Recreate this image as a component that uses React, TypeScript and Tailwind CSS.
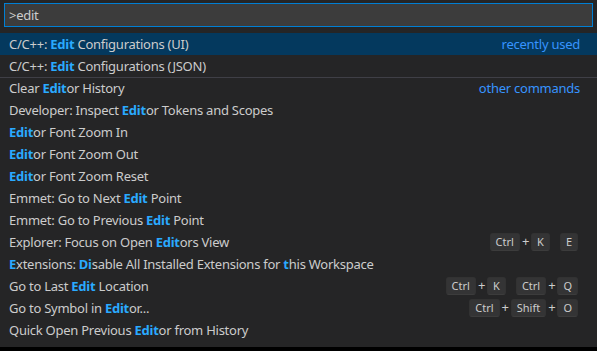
import React from "react";

type Item = {
  parts: [string, boolean][];
  label?: string;
  separator?: boolean;
  keys?: string[][];
  selected?: boolean;
};

const h = (s: string): [string, boolean] => [s, true];
const t = (s: string): [string, boolean] => [s, false];

const items: Item[] = [
  { parts: [t("C/C++: "), h("Edit"), t(" Configurations (UI)")], label: "recently used", selected: true },
  { parts: [t("C/C++: "), h("Edit"), t(" Configurations (JSON)")] },
  { parts: [t("Clear "), h("Edit"), t("or History")], label: "other commands", separator: true },
  { parts: [t("Developer: Inspect "), h("Edit"), t("or Tokens and Scopes")] },
  { parts: [h("Edit"), t("or Font Zoom In")] },
  { parts: [h("Edit"), t("or Font Zoom Out")] },
  { parts: [h("Edit"), t("or Font Zoom Reset")] },
  { parts: [t("Emmet: Go to Next "), h("Edit"), t(" Point")] },
  { parts: [t("Emmet: Go to Previous "), h("Edit"), t(" Point")] },
  { parts: [t("Explorer: Focus on Open "), h("Edit"), t("ors View")], keys: [["Ctrl", "K"], ["E"]] },
  {
    parts: [h("E"), t("xtensions: "), h("Di"), t("sable All Installed Extensions for "), h("t"), t("his Workspace")],
  },
  { parts: [t("Go to Last "), h("Edit"), t(" Location")], keys: [["Ctrl", "K"], ["Ctrl", "Q"]] },
  { parts: [t("Go to Symbol in "), h("Edit"), t("or...")], keys: [["Ctrl", "Shift", "O"]] },
  { parts: [t("Quick Open Previous "), h("Edit"), t("or from History")] },
];

const Key: React.FC<{ k: string }> = ({ k }) => (
  <span className="mx-[2px] inline-flex h-[18px] items-center rounded-[3px] border border-[#33333399] border-b-[#44444499] bg-[#8080802b] px-[5px] text-[11px] tracking-normal text-[#cccccc]">
    {k}
  </span>
);

const Keybinding: React.FC<{ chords: string[][] }> = ({ chords }) => (
  <div className="flex items-center gap-[6px]">
    {chords.map((chord, ci) => (
      <span key={ci} className="flex items-center">
        {chord.map((k, i) => (
          <React.Fragment key={i}>
            {i > 0 && <span className="text-[13px] text-[#cccccc]">+</span>}
            <Key k={k} />
          </React.Fragment>
        ))}
      </span>
    ))}
  </div>
);

const App: React.FC = () => {
  return (
    <div
      className="h-[351px] w-[597px] overflow-hidden bg-black text-[13px] tracking-[-0.25px] text-[#cccccc]"
      style={{ fontFamily: '"Noto Sans", "Open Sans", sans-serif' }}
    >
      <div className="h-[347px] bg-[#252526] pt-[3px]">
        <div className="mx-[4px] flex h-[24px] items-center border border-[#007fd4] bg-[#3c3c3c] px-[4px] pt-[1px] text-[13px] text-[#cccccc]">
          &gt;edit
        </div>
        <div className="mt-[6px] flex flex-col">
          {items.map((it, i) => (
            <div
              key={i}
              className={
                "flex h-[22px] items-center justify-between pl-[9px] pr-[17px] " +
                (it.selected ? "bg-[#04395e] " : "") +
                (it.separator ? "border-t border-[#3f3f46]" : "")
              }
            >
              <span className="whitespace-pre pt-[1px]">
                {it.parts.map(([s, hl], j) =>
                  hl ? (
                    <span key={j} className="font-bold text-[#2aaaff]">
                      {s}
                    </span>
                  ) : (
                    <span key={j}>{s}</span>
                  )
                )}
              </span>
              {it.label && <span className="pt-[1px] text-[#3794ff]">{it.label}</span>}
              {it.keys && <Keybinding chords={it.keys} />}
            </div>
          ))}
        </div>
      </div>
    </div>
  );
};

export default App;
